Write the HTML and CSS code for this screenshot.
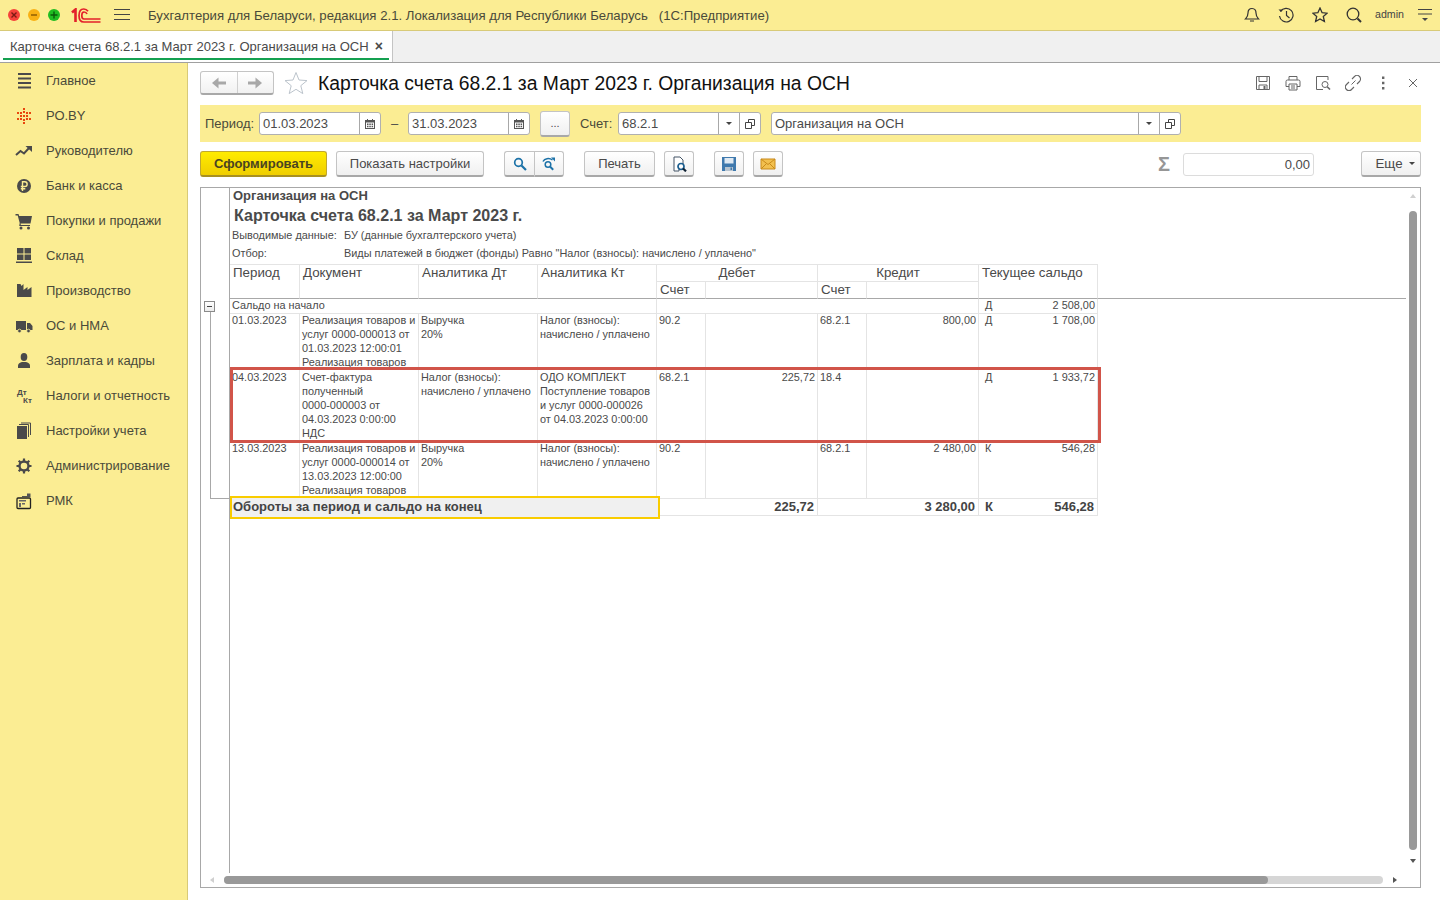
FILE: index.html
```html
<!DOCTYPE html>
<html lang="ru">
<head>
<meta charset="utf-8">
<title>Карточка счета</title>
<link rel="stylesheet" href="styles.css">
</head>
<body>
<header class="topbar">
  <div class="lights">
    <span class="light red"><svg viewBox="0 0 12 12"><path d="M3.5 3.5l5 5M8.500 3.500l-5 5" stroke="#7a1a14" stroke-width="1.4"/></svg></span>
    <span class="light amber"><svg viewBox="0 0 12 12"><path d="M3 6h6" stroke="#8a5a00" stroke-width="1.4"/></svg></span>
    <span class="light green"><svg viewBox="0 0 12 12"><path d="M6 2.500v7M2.500 6h7" stroke="#0a5a0a" stroke-width="1.4"/></svg></span>
  </div>
  <svg class="logo" viewBox="0 0 30 15"><g fill="none" stroke="#e3202a"><path d="M1 4.500L4.500 1.500V14" stroke-width="2.600"/><path d="M17 3.200C16 1.800 14.500 1 12.800 1 9.800 1 8 3.600 8 7.500S9.800 14 12.800 14H29.500" stroke-width="1.700"/><path d="M16 6C15.500 4.800 14.300 4 13 4 11.500 4 10.800 5.600 10.800 7.500S11.600 11 13 11H29.500" stroke-width="1.700"/></g></svg>
  <svg class="burger" viewBox="0 0 16 12"><path d="M0 .5h16M0 5.500h16M0 10.500h16" stroke="#444" stroke-width="1"/></svg>
  <div class="app-title">Бухгалтерия для Беларуси, редакция 2.1. Локализация для Республики Беларусь&nbsp;&nbsp;&nbsp;(1С:Предприятие)</div>
  <div class="top-tools">
    <svg class="ti" viewBox="0 0 16 16" fill="none" stroke="#333"><path d="M8 1.500c-3 0-4 2-4 4.500 0 3-1 4.500-2.500 6h13C13 10.500 12 9 12 6c0-2.500-1-4.500-4-4.500zM6 14h4" stroke-width="1.200"/></svg>
    <svg class="ti" viewBox="0 0 16 16" fill="none" stroke="#333"><path d="M2.500 4.500A6.800 6.800 0 1 1 1.500 9M8.500 4v4.500l3 2.500" stroke-width="1.200"/><path d="M.5 2.500l2.500 2.500 2-2.500" fill="#333" stroke="none"/></svg>
    <svg class="ti" viewBox="0 0 16 16" fill="none" stroke="#333"><path d="M8 1l2.100 4.700 5 .5-3.800 3.300 1.100 5L8 12l-4.400 2.500 1.100-5L.9 6.200l5-.5z" stroke-width="1.300"/></svg>
    <svg class="ti" viewBox="0 0 16 16" fill="none" stroke="#333"><circle cx="7" cy="7" r="5.800" stroke-width="1.300"/><path d="M11.500 11.500l3.500 3.500" stroke-width="1.900"/></svg>
    <span class="admin">admin</span>
    <svg class="ti last" viewBox="0 0 16 16"><path d="M1 2.500h14M1 7h14" stroke="#444" stroke-width="1"/><path d="M5 11h6l-3 3z" fill="#444"/></svg>
  </div>
</header>

<nav class="tabs">
  <div class="tab"><div class="tab-inner"><span>Карточка счета 68.2.1 за Март 2023 г. Организация на ОСН</span><span class="tab-x">×</span></div></div>
</nav>

<div class="body">
  <aside class="side">
    <a class="nav"><svg class="ni" viewBox="0 0 18 18"><path d="M3 1h13v2H3zM3 5.500h13v2H3zM3 10h13v2H3zM3 14.500h13v2H3z" fill="#4a4a4a"/></svg>Главное</a>
    <a class="nav"><svg class="ni crisp" viewBox="0 0 18 18" fill="#e8470e"><path d="M8 1h2v2H8zM8 4h2v2H8zM8 8h2v2H8zM8 12h2v2H8zM8 15h2v2H8zM5 5h2v2H5zM11 5h2v2h-2zM5 8h2v2H5zM11 8h2v2h-2zM5 11h2v2H5zM11 11h2v2h-2zM2 5h2v2H2zM14 5h2v2h-2zM2 11h2v2H2zM14 11h2v2h-2z"/></svg>РО.BY</a>
    <a class="nav"><svg class="ni" viewBox="0 0 18 18"><path d="M1 13l4.500-4 3.500 2.500L14 6" fill="none" stroke="#4a4a4a" stroke-width="2"/><path d="M10.500 4H17v6z" fill="#4a4a4a"/></svg>Руководителю</a>
    <a class="nav"><svg class="ni" viewBox="0 0 18 18"><circle cx="9" cy="9" r="7" fill="#4a4a4a"/><path d="M7.500 14V4.800h2.300a2.300 2.300 0 0 1 0 4.700H5.800M5.800 11.800h4.500" fill="none" stroke="#fbed93" stroke-width="1.400"/></svg>Банк и касса</a>
    <a class="nav"><svg class="ni" viewBox="0 0 18 18" fill="#4a4a4a"><path d="M.5 2h3l.7 2H17l-1.500 7.500H5.500L5.800 13H15v1H4.200L4.700 11 2.700 3.400H.5z"/><circle cx="6" cy="16" r="1.500"/><circle cx="13.500" cy="16" r="1.500"/></svg>Покупки и продажи</a>
    <a class="nav"><svg class="ni" viewBox="0 0 18 18" fill="#4a4a4a"><path d="M2 1h6.500v5.500H2zM9.500 1H16v5.500H9.500zM2 7.500h6.500V13H2zM9.500 7.500H16V13H9.500zM1 14.500h16V16H1z"/></svg>Склад</a>
    <a class="nav"><svg class="ni" viewBox="0 0 18 18" fill="#4a4a4a"><path d="M2 2h3.500l1 2L8.500 2v6l4-3v3l4-3v10H2z"/></svg>Производство</a>
    <a class="nav"><svg class="ni" viewBox="0 0 18 18" fill="#4a4a4a"><path d="M1 4h10v9H1zM12 6h3l2.500 3v4H12z"/><circle cx="4.500" cy="14" r="1.800" stroke="#fbed93" stroke-width=".8"/><circle cx="13.500" cy="14" r="1.800" stroke="#fbed93" stroke-width=".8"/></svg>ОС и НМА</a>
    <a class="nav"><svg class="ni" viewBox="0 0 18 18" fill="#4a4a4a"><ellipse cx="9" cy="5" rx="3.300" ry="4"/><path d="M3 16v-2.500c0-2 2-3 4-3.500h4c2 .5 4 1.500 4 3.500V16z"/></svg>Зарплата и кадры</a>
    <a class="nav"><span class="ni dtkt"><span class="dt">Дт</span><span class="kt">Кт</span></span>Налоги и отчетность</a>
    <a class="nav"><svg class="ni" viewBox="0 0 18 18"><path d="M2 4h10v13H2z" fill="#4a4a4a"/><path d="M4 2.500h9.500V15M6 1h9.500v12" fill="none" stroke="#4a4a4a"/></svg>Настройки учета</a>
    <a class="nav"><svg class="ni" viewBox="0 0 18 18"><circle cx="9" cy="9" r="4.500" fill="none" stroke="#4a4a4a" stroke-width="2.400"/><path d="M9 1.500v3M9 13.500v3M1.500 9h3M13.500 9h3M3.700 3.700l2.100 2.100M12.200 12.200l2.100 2.100M14.300 3.700l-2.100 2.100M5.800 12.200l-2.100 2.100" stroke="#4a4a4a" stroke-width="2.200"/></svg>Администрирование</a>
    <a class="nav"><svg class="ni" viewBox="0 0 18 18"><rect x="2" y="6" width="13.500" height="10.500" rx="1" fill="none" stroke="#222" stroke-width="1.300"/><path d="M4 8h7v1.500H4zM4 11h2v4H4zM7 11h3v1.500H7z" fill="#666"/><path d="M7 4h5V1.500h3.500V5H7z" fill="#555"/></svg>РМК</a>
  </aside>

  <main class="main">
    <div class="form-head">
      <div class="nav-btns">
        <button class="nb"><svg viewBox="0 0 16 12" class="arr"><path d="M15 6H6" fill="none" stroke="#a8a8a8" stroke-width="3"/><path d="M7.500 .5L1 6l6.500 5.500z" fill="#a8a8a8"/></svg></button>
        <button class="nb"><svg viewBox="0 0 16 12" class="arr"><path d="M1 6h9" fill="none" stroke="#a8a8a8" stroke-width="3"/><path d="M8.500 .5L15 6l-6.500 5.500z" fill="#a8a8a8"/></svg></button>
      </div>
      <svg class="star" viewBox="0 0 24 24"><path d="M12 1.500l3 7.500 8 .6-6.200 5.100 2 7.900L12 18.300l-6.800 4.300 2-7.900L1 9.600 9 9z" fill="#fff" stroke="#bcc4cc"/></svg>
      <h1 class="title">Карточка счета 68.2.1 за Март 2023 г. Организация на ОСН</h1>
      <div class="form-tools">
        <svg class="fi" viewBox="0 0 16 16" fill="none" stroke="#666"><path d="M1.500 1.500h13v13h-13zM4 1.500v5h8v-5M4 14.500V10h8v4.500"/><path d="M8.500 11h2v3h-2z" fill="#666" stroke="none"/></svg>
        <svg class="fi" viewBox="0 0 16 16" fill="none" stroke="#666"><path d="M4 5V1.500h8V5M4 11.500H1V6.500a1.500 1.500 0 0 1 1.500-1.500h11A1.500 1.500 0 0 1 15 6.500v5h-3M4 9h8v6H4zM6 11h4M6 13h4"/></svg>
        <svg class="fi" viewBox="0 0 16 16" fill="none" stroke="#666"><path d="M13 5V1.500H1.500v13H8"/><circle cx="10" cy="9.500" r="3"/><path d="M12.200 11.700l2.800 2.800" stroke-width="1.600"/></svg>
        <svg class="fi" viewBox="0 0 16 16" fill="none" stroke="#666"><path d="M6.500 9.500l4-4"/><path d="M7 4l2.500-2.500a3 3 0 0 1 5 5L12 9M9 12l-2.500 2.500a3 3 0 0 1-5-5L4 7" stroke-width="1.100"/></svg>
        <svg class="fi" viewBox="0 0 16 16" fill="#666"><path d="M7 1.500h2.400v2.500H7zM7 6.800h2.400v2.500H7zM7 12h2.400v2.500H7z"/></svg>
        <svg class="fi" viewBox="0 0 16 16"><path d="M4 4l8 8M12 4l-8 8" stroke="#666" fill="none"/></svg>
      </div>
    </div>

    <div class="filter">
      <label class="lbl l-period">Период:</label>
      <div class="field f-date"><span class="val">01.03.2023</span><span class="cell"><svg class="cal" viewBox="0 0 10 10"><path d="M0 1h10v9H0z" fill="#555"/><path d="M1 3.500h8V9H1z" fill="#fff"/><path d="M2 4.500h1.500V6H2zM4.300 4.500h1.500V6H4.300zM6.600 4.500h1.500V6H6.600zM2 6.800h1.500v1.500H2zM4.300 6.800h1.500v1.500H4.300zM6.600 6.800h1.500v1.500H6.600z" fill="#555"/><path d="M2 0h1v2H2zM7 0h1v2H7z" fill="#555"/></svg></span></div>
      <span class="dash">–</span>
      <div class="field f-date"><span class="val">31.03.2023</span><span class="cell"><svg class="cal" viewBox="0 0 10 10"><path d="M0 1h10v9H0z" fill="#555"/><path d="M1 3.500h8V9H1z" fill="#fff"/><path d="M2 4.500h1.500V6H2zM4.300 4.500h1.500V6H4.300zM6.600 4.500h1.500V6H6.600zM2 6.800h1.500v1.500H2zM4.300 6.800h1.500v1.500H4.300zM6.600 6.800h1.500v1.500H6.600z" fill="#555"/><path d="M2 0h1v2H2zM7 0h1v2H7z" fill="#555"/></svg></span></div>
      <button class="btn b-dots">...</button>
      <label class="lbl l-acct">Счет:</label>
      <div class="field f-acct"><span class="val">68.2.1</span><span class="cell"><i class="caret"></i></span><span class="cell"><svg class="open" viewBox="0 0 10 10" fill="none" stroke="#444"><path d="M3.500 3V.5h6v6H7M.5 3.500h6v6h-6z"/></svg></span></div>
      <div class="field f-org"><span class="val">Организация на ОСН</span><span class="cell"><i class="caret"></i></span><span class="cell"><svg class="open" viewBox="0 0 10 10" fill="none" stroke="#444"><path d="M3.500 3V.5h6v6H7M.5 3.500h6v6h-6z"/></svg></span></div>
    </div>

    <div class="toolbar">
      <button class="btn primary">Сформировать</button>
      <button class="btn b-settings">Показать настройки</button>
      <div class="pair">
        <button class="btn ic"><svg class="tbi" viewBox="0 0 14 14" fill="none" stroke="#1c72a8"><circle cx="5.500" cy="5.500" r="3.800" stroke-width="1.700"/><path d="M8.500 8.500l4.500 4.500" stroke-width="2.200"/></svg></button>
        <button class="btn ic"><svg class="tbi" viewBox="0 0 14 14" fill="none" stroke="#1c72a8"><circle cx="6" cy="7.500" r="2.800" stroke-width="1.500"/><path d="M8.200 9.700l3 3" stroke-width="2"/><path d="M1 4.500C2.500 1.500 7 .5 10.500 3" stroke-width="1.500"/><path d="M9 .5h4v4z" fill="#1c72a8" stroke="none"/></svg></button>
      </div>
      <button class="btn b-print">Печать</button>
      <button class="btn ic b-prev"><svg class="tbi lg" viewBox="0 0 16 16"><path d="M3 1h6l3 3v4H8v7H3z" fill="#fff" stroke="#456"/><circle cx="10" cy="10.500" r="3" fill="#fff" stroke="#1c5f90" stroke-width="1.700"/><path d="M12 12.500l3 2.800" stroke="#123" stroke-width="2.200"/></svg></button>
      <button class="btn ic b-save"><svg class="tbi xl" viewBox="0 0 16 16"><path d="M1 1h14v14H1z" fill="#3f79ad"/><path d="M3.500 2h9v5.500h-9z" fill="#dfe9f2"/><path d="M4 11h8v4H4z" fill="#b8c4cf"/><path d="M9.500 11.500H11V14H9.500z" fill="#3f79ad"/></svg></button>
      <button class="btn ic b-mail"><svg class="tbi xl" viewBox="0 0 16 16"><path d="M1 3h14v10H1z" fill="#f2c04f" stroke="#c98a1a"/><path d="M1 3l7 5.500L15 3M1 13l5.500-5.500M15 13L9.500 7.500" fill="none" stroke="#c98a1a"/></svg></button>
      <span class="sigma">Σ</span>
      <div class="sum">0,00</div>
      <button class="btn b-more">Еще <i class="caret"></i></button>
    </div>

    <section class="report">
      <div class="gutter">
        <span class="minus"></span>
        <span class="tree"></span>
      </div>
      <div class="sheet">
        <table class="grid">
          <colgroup>
            <col class="c-per"><col class="c-wide"><col class="c-wide"><col class="c-wide">
            <col class="c-acc"><col class="c-sum"><col class="c-acc"><col class="c-sum">
            <col class="c-dk"><col class="c-bal"><col class="c-rest">
          </colgroup>
          <tr class="r-org"><td colspan="11" class="t-org">Организация на ОСН</td></tr>
          <tr class="r-title"><td colspan="11" class="t-title">Карточка счета 68.2.1 за Март 2023 г.</td></tr>
          <tr class="r-sub"><td colspan="11"><div class="kv"><span class="k">Выводимые данные:</span><span>БУ (данные бухгалтерского учета)</span></div></td></tr>
          <tr class="r-sub2"><td colspan="11"><div class="kv"><span class="k">Отбор:</span><span>Виды платежей в бюджет (фонды) Равно "Налог (взносы): начислено / уплачено"</span></div></td></tr>
          <tr class="r-h1 hd">
            <th rowspan="2">Период</th><th rowspan="2">Документ</th><th rowspan="2">Аналитика Дт</th><th rowspan="2">Аналитика Кт</th>
            <th colspan="2" class="ctr">Дебет</th><th colspan="2" class="ctr">Кредит</th><th colspan="2" rowspan="2">Текущее сальдо</th><td class="rule-only" rowspan="2"></td>
          </tr>
          <tr class="r-h2 hd"><th>Счет</th><th></th><th>Счет</th><th></th></tr>
          <tr class="r-saldo dt-row">
            <td colspan="4" class="bl">Сальдо на начало</td><td colspan="4" class="bl"></td>
            <td class="dk">Д</td><td class="num bl">2 508,00</td><td class="rest"></td>
          </tr>
          <tr class="r-1 dt-row">
            <td class="bl">01.03.2023</td>
            <td class="bl">Реализация товаров и<br>услуг 0000-000013 от<br>01.03.2023 12:00:01<br>Реализация товаров</td>
            <td class="bl">Выручка<br>20%</td>
            <td class="bl">Налог (взносы):<br>начислено / уплачено</td>
            <td class="bl">90.2</td><td class="bl num"></td><td class="bl">68.2.1</td><td class="bl num">800,00</td>
            <td class="dk">Д</td><td class="num bl">1 708,00</td><td class="rest"></td>
          </tr>
          <tr class="r-2 dt-row">
            <td class="bl">04.03.2023</td>
            <td class="bl">Счет-фактура<br>полученный<br>0000-000003 от<br>04.03.2023 0:00:00<br>НДС</td>
            <td class="bl">Налог (взносы):<br>начислено / уплачено</td>
            <td class="bl">ОДО КОМПЛЕКТ<br>Поступление товаров<br>и услуг 0000-000026<br>от 04.03.2023 0:00:00</td>
            <td class="bl">68.2.1</td><td class="bl num">225,72</td><td class="bl">18.4</td><td class="bl num"></td>
            <td class="dk">Д</td><td class="num bl">1 933,72</td><td class="rest"></td>
          </tr>
          <tr class="r-3 dt-row">
            <td class="bl">13.03.2023</td>
            <td class="bl">Реализация товаров и<br>услуг 0000-000014 от<br>13.03.2023 12:00:00<br>Реализация товаров</td>
            <td class="bl">Выручка<br>20%</td>
            <td class="bl">Налог (взносы):<br>начислено / уплачено</td>
            <td class="bl">90.2</td><td class="bl num"></td><td class="bl">68.2.1</td><td class="bl num">2 480,00</td>
            <td class="dk">К</td><td class="num bl">546,28</td><td class="rest"></td>
          </tr>
          <tr class="r-tot tot-row">
            <td colspan="4" class="bl sel-cell"><div class="sel">Обороты за период и сальдо на конец</div></td>
            <td colspan="2" class="bl num">225,72</td><td colspan="2" class="bl num">3 280,00</td>
            <td class="dk">К</td><td class="num bl">546,28</td><td class="rest"></td>
          </tr>
        </table>
        <div class="mark"></div>
      </div>
      <div class="vscroll">
        <i class="tri up"></i>
        <span class="vthumb"></span>
        <i class="tri down"></i>
      </div>
      <div class="hscroll">
        <i class="tri left"></i>
        <div class="htrack"><span class="hthumb"></span></div>
        <i class="tri right"></i>
      </div>
    </section>
  </main>
</div>
</body>
</html>
```
FILE: styles.css
```css
* { box-sizing: border-box; }
html, body { margin: 0; height: 100%; }
body {
  width: 1440px; height: 900px; overflow: hidden; background: #fff;
  font-family: "Liberation Sans", Arial, sans-serif; font-size: 13px; color: #4a4a4a;
}

/* top bar */
.topbar { height: 31px; background: #fbed93; border-bottom: 1px solid #d8ca78; display: flex; align-items: center; }
.lights { display: flex; gap: 8px; margin-left: 8px; }
.light { width: 12px; height: 12px; border-radius: 50%; display: block; }
.light svg { display: block; width: 12px; height: 12px; }
.red { background: #f5423a; }
.amber { background: #f9b115; }
.green { background: #1fbd22; }
.logo { width: 30px; height: 15px; margin-left: 11px; flex: none; }
.burger { width: 16px; height: 12px; margin-left: 13px; flex: none; }
.app-title { margin-left: 18px; white-space: nowrap; color: #4a4a3a; font-size: 13.18px; }
.top-tools { margin-left: auto; display: flex; align-items: center; }
.ti { width: 16px; height: 16px; margin-right: 18px; flex: none; }
.ti.last { margin-right: 7px; margin-left: 13px; }
.admin { font-size: 10.67px; margin-left: -5px; color: #444; position: relative; top: -1px; }

/* tabs */
.tabs { height: 32px; background: #f0f0f0; border-bottom: 1px solid #a0a0a0; }
.tab { width: 393px; height: 31px; background: #fff; border-right: 1px solid #c4c4c4; padding: 0 3px; }
.tab-inner { height: 29px; border-bottom: 2px solid #14a050; padding: 3px 0 0 7px; display: flex; align-items: center; white-space: nowrap; font-size: 13.04px; }
.tab-x { margin-left: 6px; font-weight: bold; font-size: 14px; }

/* layout */
.body { display: flex; height: 837px; }
.side { width: 188px; flex: none; background: #fbed93; border-right: 1px solid #d8ca78; }
.nav { display: flex; align-items: center; height: 35px; white-space: nowrap; color: #4a4a3a; }
.ni { width: 18px; height: 18px; margin-left: 15px; margin-right: 13px; flex: none; }
.crisp { shape-rendering: crispEdges; }
.dtkt { display: block; padding: 2px 0 0 2px; font-size: 8px; font-weight: bold; color: #4a4a4a; line-height: 8px; }
.dt { display: block; }
.kt { display: block; padding-left: 6px; }
.main { flex: 1; padding: 8px 19px 0 12px; min-width: 0; }

/* form header */
.form-head { display: flex; align-items: center; height: 24px; }
.nav-btns { display: flex; width: 74px; height: 24px; flex: none; border: 1px solid #c4c4c4; border-bottom: 2px solid #a8a8a8; border-radius: 3px; background: linear-gradient(#fff, #f1f1f1); }
.nb { flex: 1; border: 0; background: none; padding: 0; display: flex; align-items: center; justify-content: center; }
.nb + .nb { border-left: 1px solid #d0d0d0; }
.arr { width: 16px; height: 12px; }
.star { width: 24px; height: 24px; margin-left: 10px; flex: none; }
.title { margin: 0 0 0 10px; padding-top: 1px; font-size: 19.33px; font-weight: normal; color: #111; white-space: nowrap; }
.form-tools { margin-left: auto; display: flex; gap: 14px; }
.fi { width: 16px; height: 16px; flex: none; }

/* filter */
.filter { height: 37px; margin-top: 10px; background: #fbed93; display: flex; align-items: center; padding-left: 5px; }
.lbl { color: #4a4a3a; white-space: nowrap; flex: none; }
.l-period { width: 54px; }
.l-acct { width: 38px; margin-left: 10px; }
.field { height: 23px; background: #fff; border: 1px solid #b0b0b0; border-radius: 3px; display: flex; align-items: stretch; flex: none; }
.val { flex: 1; padding: 0 3px; line-height: 21px; white-space: nowrap; overflow: hidden; }
.cell { width: 21px; flex: none; border-left: 1px solid #a8a8a8; display: flex; align-items: center; justify-content: center; }
.cal { width: 10px; height: 10px; }
.open { width: 10px; height: 10px; }
.caret { display: inline-block; width: 0; height: 0; border: 3px solid transparent; border-top: 3px solid #444; border-bottom: 0; }
.f-date { width: 122px; }
.dash { width: 27px; text-align: center; flex: none; }
.f-acct { width: 143px; }
.f-org { width: 410px; margin-left: 10px; }

/* buttons */
.btn {
  height: 26px; padding: 0; border: 1px solid #c4c4c4; border-bottom: 2px solid #a8a8a8; border-radius: 3px;
  background: linear-gradient(#fff, #f0f0f0); font: inherit; color: #4a4a4a; white-space: nowrap;
  display: flex; align-items: center; justify-content: center; flex: none;
}
.b-dots { width: 30px; margin-left: 10px; font-size: 11px; }
.toolbar { height: 26px; margin-top: 9px; display: flex; align-items: center; }
.primary { width: 127px; background: linear-gradient(#ffec00, #f0ce00); border-color: #c0a830; border-bottom-color: #a89020; font-weight: bold; color: #4a4420; }
.b-settings { width: 148px; margin-left: 9px; }
.pair { display: flex; margin-left: 20px; flex: none; }
.pair .btn { width: 30px; }
.pair .btn:first-child { border-radius: 3px 0 0 3px; border-right: 0; }
.pair .btn:last-child { border-radius: 0 3px 3px 0; }
.ic { width: 30px; }
.tbi { width: 14px; height: 14px; }
.tbi.lg { width: 16px; height: 16px; }
.tbi.xl { width: 16px; height: 16px; }
.b-print { width: 71px; margin-left: 20px; }
.b-prev { margin-left: 9px; }
.b-save { margin-left: 20px; }
.b-mail { margin-left: 9px; }
.sigma { margin-left: 372px; width: 18px; flex: none; font-size: 20px; font-weight: bold; color: #969696; text-align: center; }
.sum { width: 131px; height: 23px; flex: none; margin-left: 10px; border: 1px solid #dcdcdc; border-radius: 3px; text-align: right; padding-right: 3px; line-height: 21px; }
.b-more { width: 60px; margin-left: 47px; gap: 6px; padding-left: 8px; font-size: 13.33px; }

/* report */
.report {
  margin-top: 10px; height: 701px; border: 1px solid #a8a8a8; background: #fff;
  display: grid; grid-template-columns: 29px 1176px 14px; grid-template-rows: 685px 14px;
}
.gutter { border-right: 1px solid #a8a8a8; padding: 113px 0 0 3px; }
.minus { display: block; width: 11px; height: 11px; border: 1px solid #8a8a8a; background: linear-gradient(#fff, #ececec); position: relative; }
.minus::after { content: ""; position: absolute; left: 2px; right: 2px; top: 4px; height: 1px; background: #444; }
.tree { display: block; width: 19px; height: 187px; margin-left: 6px; border-left: 1px solid #a8a8a8; border-bottom: 1px solid #a8a8a8; }

.sheet { position: relative; overflow: hidden; }
.grid { border-collapse: separate; border-spacing: 0; table-layout: fixed; width: 1176px; font-size: 10.9px; color: #4a4a4a; }
.c-per { width: 70px; } .c-wide { width: 119px; } .c-acc { width: 49px; } .c-sum { width: 112px; }
.c-dk { width: 27px; } .c-bal { width: 92px; } .c-rest { width: 308px; }
.grid td, .grid th { padding: 0 2px; vertical-align: top; overflow: hidden; font-weight: normal; text-align: left; white-space: nowrap; }
.r-org { height: 16px; } .r-title { height: 22px; } .r-sub { height: 18px; } .r-sub2 { height: 20px; }
.r-h1 { height: 18px; } .r-h2 { height: 17px; } .r-saldo { height: 15px; }
.r-1 { height: 56px; } .r-2 { height: 72px; } .r-3 { height: 57px; } .r-tot { height: 17px; }
.grid .t-org { font-size: 13px; font-weight: bold; padding-left: 3px; line-height: 15px; }
.grid .t-title { font-size: 16.05px; font-weight: bold; padding: 1px 0 0 4px; line-height: 21px; }
.kv { display: flex; white-space: nowrap; line-height: 18px; }
.k { width: 112px; flex: none; }
.grid .hd th { font-size: 13.33px; line-height: 15px; padding: 0 3px; border-right: 1px solid #e4e4e4; border-top: 1px solid #e4e4e4; border-bottom: 1px solid #e4e4e4; }
.grid .r-h1 th[rowspan] { border-bottom: 1px solid #a8a8a8; }
.grid .r-h2 th { border-top: 0; border-bottom: 1px solid #a8a8a8; }
.grid .hd .ctr { text-align: center; }
.rule-only { border-bottom: 1px solid #a8a8a8; }
.dt-row td { line-height: 14px; }
.r-1 td::before, .r-3 td::before { content: ""; display: block; margin-top: -1px; }
.grid .r-saldo td { line-height: 13px; border-bottom: 1px solid #e4e4e4; }
.bl { border-right: 1px solid #e4e4e4; }
.r-3 td { border-bottom: 1px solid #e4e4e4; }
.grid .r-3 .rest, .grid .r-saldo .rest { border-bottom: 0; }
.grid .num { text-align: right; }
.grid .dk { padding-left: 6px; }
.grid .tot-row td { font-size: 13px; font-weight: bold; line-height: 15px; border-bottom: 1px solid #e4e4e4; color: #444; padding-right: 3px; }
.grid .tot-row .rest { border-bottom: 0; }
.grid .tot-row .sel-cell { position: relative; overflow: visible; }
.sel { position: absolute; left: 0; top: -3px; width: 430px; height: 23px; background: #f0f0f0; border: 2px solid #f9cc00; padding-left: 1px; line-height: 18px; }
.mark { position: absolute; left: 0; top: 179px; width: 871px; height: 76px; border: 3px solid #d15449; }

/* scrollbars */
.vscroll { display: flex; flex-direction: column; align-items: center; padding-top: 6px; }
.vthumb { display: block; width: 8px; height: 639px; margin-top: 13px; background: #999; border-radius: 4px; flex: none; }
.tri { display: block; width: 0; height: 0; border: 3px solid transparent; flex: none; }
.up { border-top: 0; border-bottom: 4px solid #d0d0d0; }
.down { margin-top: 9px; border-bottom: 0; border-top: 4px solid #555; }
.left { border-left: 0; border-right: 4px solid #d0d0d0; }
.right { border-right: 0; border-left: 4px solid #555; }
.hscroll { grid-column: 1 / 4; display: flex; align-items: center; padding-left: 9px; }
.htrack { width: 1159px; height: 8px; margin-left: 10px; margin-right: 10px; background: #d6d6d6; border-radius: 4px; flex: none; }
.hthumb { display: block; width: 1044px; height: 8px; background: #999; border-radius: 4px; }
```
